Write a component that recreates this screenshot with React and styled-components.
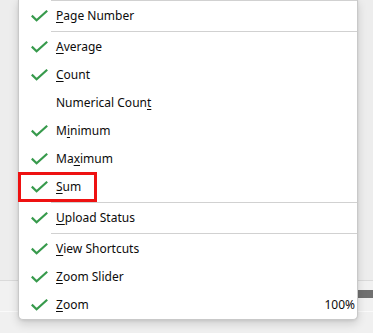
import React from "react";
import styled, { createGlobalStyle } from "styled-components";

const GlobalStyle = createGlobalStyle`
  html, body {
    margin: 0;
    padding: 0;
    background: #eeeeee;
    font-family: "Noto Sans", "Open Sans", sans-serif;
  }
`;

const Window = styled.div`
  position: relative;
  width: 373px;
  height: 333px;
  overflow: hidden;
  background: #f0f0f0;
`;

const SheetArea = styled.div`
  height: 280px;
  background: #ededed;
  border-bottom: 1px solid #dadada;
`;

const StatusBar = styled.div`
  height: 31px;
  background: #f1f1f1;
  border-bottom: 1px solid #fafafa;
  display: flex;
  justify-content: flex-end;
  align-items: flex-start;
  padding-top: 9px;
  box-sizing: border-box;
`;

const SliderTrack = styled.div`
  width: 16px;
  height: 8px;
  background: #707070;
`;

const Menu = styled.div`
  position: absolute;
  top: -1px;
  left: 18px;
  width: 340px;
  box-sizing: border-box;
  background: #ffffff;
  border: 1px solid #c9c9c9;
  border-top: none;
  border-radius: 0 0 5px 5px;
  box-shadow: 0 4px 10px rgba(0, 0, 0, 0.14), 0 1px 3px rgba(0, 0, 0, 0.08);
  display: flex;
  flex-direction: column;
`;

const Separator = styled.div`
  height: 3px;
  display: flex;
  align-items: center;
  padding-left: 32px;

  &::after {
    content: "";
    flex: 1;
    height: 1px;
    background: #d1d1d1;
  }
`;

const Row = styled.div`
  position: relative;
  height: 28px;
  display: flex;
  align-items: center;
  padding-right: 2px;
  font-size: 12px;
  color: #0c0c0c;
`;

const CheckCell = styled.div`
  width: 37px;
  display: flex;
  justify-content: flex-start;
  padding-left: 12px;
  padding-bottom: 1px;
  box-sizing: border-box;
`;

const Label = styled.span`
  flex: 1;
  white-space: nowrap;
  padding-bottom: 2px;
`;

const Key = styled.span`
  text-decoration: underline;
  text-underline-offset: 2px;
`;

const Value = styled.span`
  white-space: nowrap;
  padding-bottom: 2px;
`;

const Highlight = styled.div`
  position: absolute;
  left: -1px;
  top: -1px;
  width: 79px;
  height: 30px;
  box-sizing: border-box;
  border: 3px solid #ee1111;
  pointer-events: none;
`;

const Check = () => (
  <svg width="17" height="12" viewBox="0 0 17 12">
    <path
      d="M0.8 5.6 L5.6 10.2 L16.2 0.8"
      fill="none"
      stroke="#379a4c"
      strokeWidth="2.2"
    />
  </svg>
);

const items = [
  { pre: "", key: "P", post: "age Number", checked: true },
  "sep",
  { pre: "", key: "A", post: "verage", checked: true },
  { pre: "", key: "C", post: "ount", checked: true },
  { pre: "Numerical Coun", key: "t", post: "", checked: false },
  { pre: "M", key: "i", post: "nimum", checked: true },
  { pre: "Ma", key: "x", post: "imum", checked: true },
  { pre: "", key: "S", post: "um", checked: true, marked: true },
  "sep",
  { pre: "", key: "U", post: "pload Status", checked: true },
  "sep",
  { pre: "", key: "V", post: "iew Shortcuts", checked: true },
  { pre: "", key: "Z", post: "oom Slider", checked: true },
  { pre: "", key: "Z", post: "oom", checked: true, value: "100%" },
];

const App = () => (
  <>
    <GlobalStyle />
    <Window>
      <SheetArea />
      <StatusBar>
        <SliderTrack />
      </StatusBar>
      <Menu>
        <Separator />
        {items.map((item, i) =>
          item === "sep" ? (
            <Separator key={i} />
          ) : (
            <Row key={i}>
              <CheckCell>{item.checked && <Check />}</CheckCell>
              <Label>
                {item.pre}
                <Key>{item.key}</Key>
                {item.post}
              </Label>
              {item.value && <Value>{item.value}</Value>}
              {item.marked && <Highlight />}
            </Row>
          )
        )}
      </Menu>
    </Window>
  </>
);

export default App;
